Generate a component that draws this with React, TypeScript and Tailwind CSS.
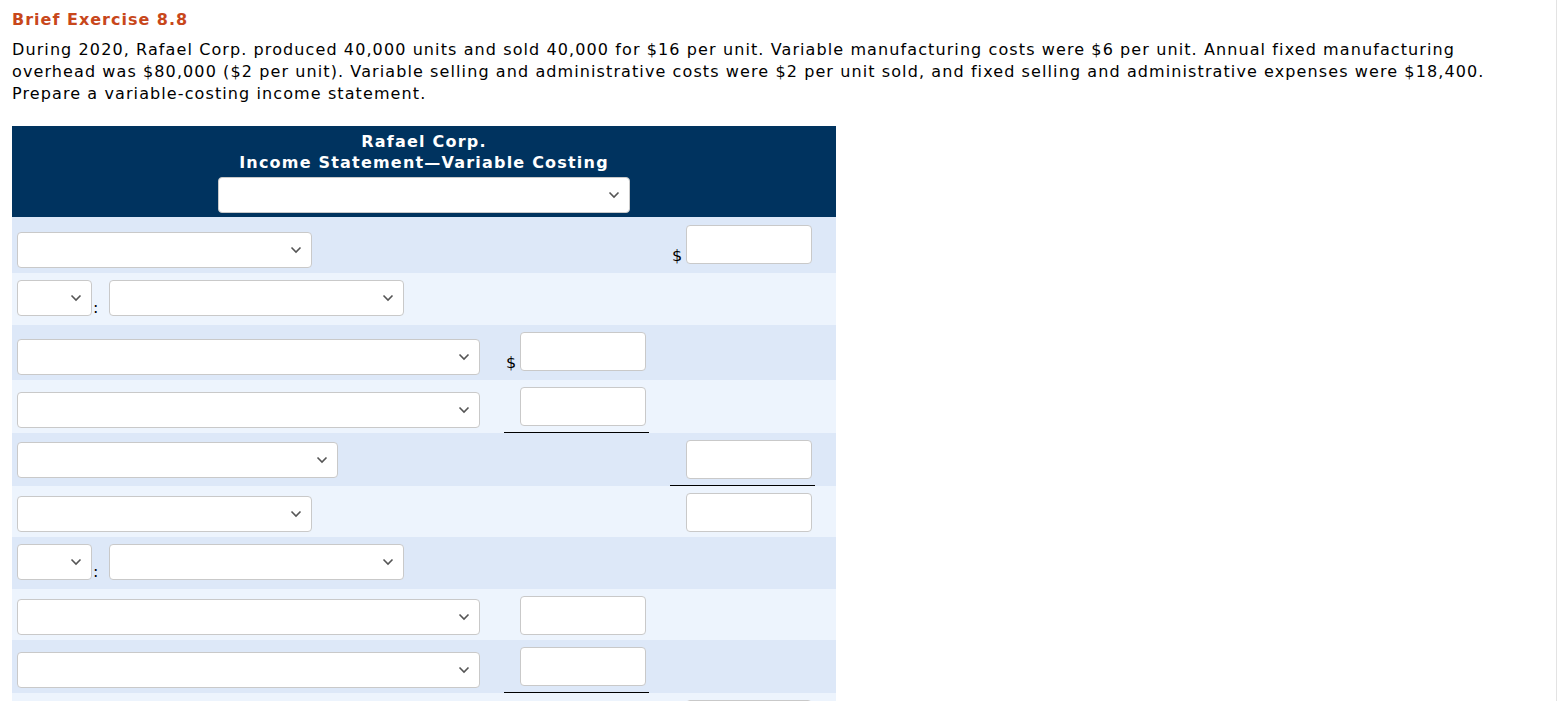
import React from 'react';

const Chevron = () => (
  <svg width="12" height="8" viewBox="0 0 12 8" className="absolute right-[9px] top-1/2 -translate-y-1/2">
    <path d="M1.5 1.5 L6 6 L10.5 1.5" fill="none" stroke="#555" strokeWidth="1.6" />
  </svg>
);

const Select = ({ className }: { className: string }) => (
  <div className={`relative h-[36px] bg-white border border-[#c9c9c9] rounded-[4px] shrink-0 ${className}`}>
    <Chevron />
  </div>
);

const Input = () => (
  <div className="w-[126px] h-[39px] bg-white border border-[#c9c9c9] rounded-[4px] shrink-0" />
);

const Dollar = () => <span className="w-[16px] pl-[2px] leading-none text-[16px] text-black">$</span>;

// amount cell: optional $, optional input, optional underline
const Amount = ({
  top,
  dollar,
  input = true,
  line,
}: {
  top?: string;
  dollar?: boolean;
  input?: boolean;
  line?: boolean;
}) => (
  <div className={`ml-[4px] w-[145px] h-full flex items-start ${line ? 'border-b border-black' : ''}`}>
    {input && (
      <div className={`flex items-end ${top}`}>
        {dollar ? <Dollar /> : <span className="w-[16px]" />}
        <Input />
      </div>
    )}
  </div>
);

const Row = ({
  h,
  light,
  left,
  mid,
  right,
}: {
  h: string;
  light?: boolean;
  left: React.ReactNode;
  mid?: React.ReactNode;
  right?: React.ReactNode;
}) => (
  <div className={`flex ${h} ${light ? 'bg-[#edf4fd]' : 'bg-[#dde8f8]'}`}>
    <div className="w-[488px] pl-[5px] h-full">{left}</div>
    <div className="w-[166px] h-full">{mid}</div>
    <div className="w-[170px] h-full">{right}</div>
  </div>
);

const Pair = ({ top }: { top: string }) => (
  <div className={`flex items-end ${top}`}>
    <Select className="w-[75px]" />
    <span className="w-[17px] pl-[1px] leading-none text-[16px]">:</span>
    <Select className="w-[295px]" />
  </div>
);

export default function App() {
  return (
    <div className="min-h-[701px] w-[1557px] border-r border-[#e3e3e3] bg-white pl-[12px] pt-[9px] font-['Verdana','DejaVu_Sans',sans-serif] text-[16px] text-black">
      <h1 className="font-bold leading-[22px] tracking-[1px] text-[#c8471b]">Brief Exercise 8.8</h1>
      <p className="mt-[8px] leading-[22px] tracking-[1.1px] whitespace-nowrap">
        During 2020, Rafael Corp. produced 40,000 units and sold 40,000 for $16 per unit. Variable manufacturing costs were $6 per unit. Annual fixed manufacturing
        <br />
        overhead was $80,000 ($2 per unit). Variable selling and administrative costs were $2 per unit sold, and fixed selling and administrative expenses were $18,400.
        <br />
        Prepare a variable-costing income statement.
      </p>

      <div className="mt-[21px] w-[824px]">
        <div className="bg-[#00335f] pt-[5px] pb-[4px] flex flex-col items-center text-white font-bold leading-[21px] tracking-[1.2px]">
          <div>Rafael Corp.</div>
          <div>Income Statement—Variable Costing</div>
          <Select className="w-[412px] mt-[4px]" />
        </div>

        <Row
          h="h-[56px]"
          left={<Select className="w-[295px] mt-[15px]" />}
          right={<Amount top="mt-[8px]" dollar />}
        />
        <Row h="h-[52px]" light left={<Pair top="mt-[7px]" />} />
        <Row
          h="h-[55px]"
          left={<Select className="w-[463px] mt-[14px]" />}
          mid={<Amount top="mt-[7px]" dollar />}
        />
        <Row
          h="h-[53px]"
          light
          left={<Select className="w-[463px] mt-[12px]" />}
          mid={<Amount top="mt-[7px]" line />}
        />
        <Row
          h="h-[53px]"
          left={<Select className="w-[321px] mt-[9px]" />}
          right={<Amount top="mt-[7px]" line />}
        />
        <Row
          h="h-[51px]"
          light
          left={<Select className="w-[295px] mt-[10px]" />}
          right={<Amount top="mt-[7px]" />}
        />
        <Row h="h-[52px]" left={<Pair top="mt-[7px]" />} />
        <Row
          h="h-[51px]"
          light
          left={<Select className="w-[463px] mt-[10px]" />}
          mid={<Amount top="mt-[7px]" />}
        />
        <Row
          h="h-[53px]"
          left={<Select className="w-[463px] mt-[12px]" />}
          mid={<Amount top="mt-[7px]" line />}
        />
        <Row h="h-[53px]" light left={null} right={<Amount top="mt-[7px]" />} />
      </div>
    </div>
  );
}
